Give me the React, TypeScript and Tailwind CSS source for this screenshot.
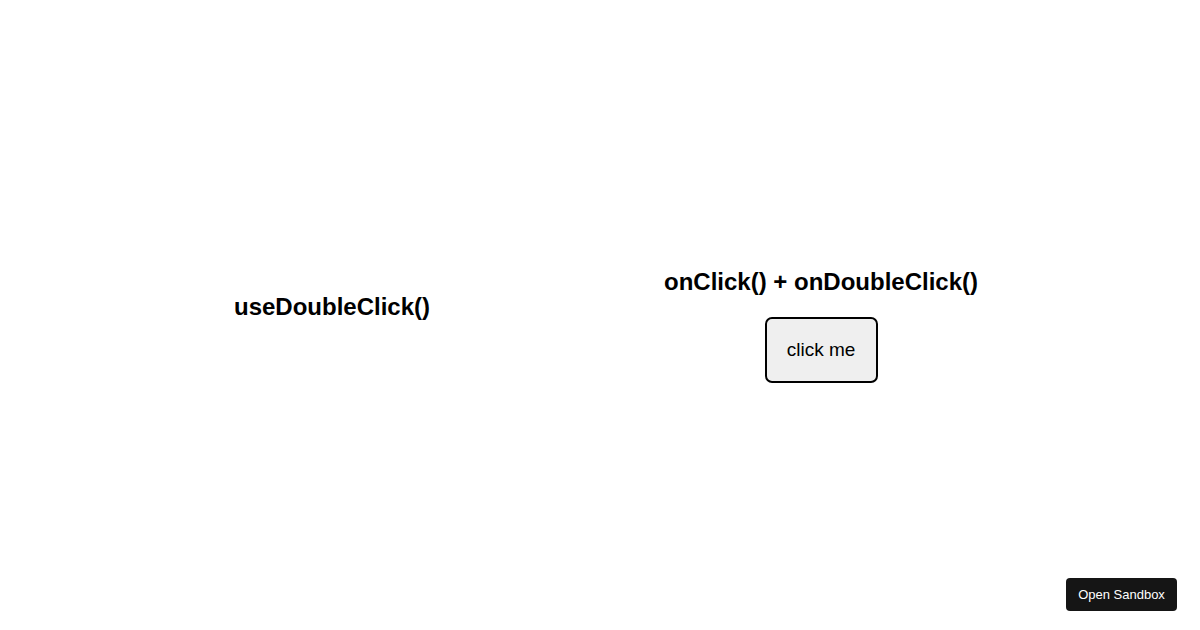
import React, { useState } from 'react'

export default function App() {
  const [count, setCount] = useState(0)

  return (
    <div className="relative h-[630px] w-[1200px] overflow-hidden bg-white font-['Liberation_Sans',Arial,sans-serif] text-black">
      <div className="flex h-full w-[1212px] items-center justify-evenly pt-5">
        <div className="flex flex-col items-center pb-9">
          <h2 className="text-[24px] font-bold leading-[28px]">useDoubleClick()</h2>
        </div>
        <div className="flex flex-col items-center gap-[21px]">
          <h2 className="text-[24px] font-bold leading-[28px]">onClick() + onDoubleClick()</h2>
          <button
            onClick={() => setCount(count + 1)}
            className="h-[66px] w-[113px] rounded-[7px] border-2 border-black bg-[#efefef] text-[19px] leading-[22px]"
          >
            click me
          </button>
        </div>
      </div>
      <button className="absolute bottom-[19px] right-[23px] h-[33px] w-[111px] rounded-[4px] bg-[#151515] text-[13px] text-white">
        Open Sandbox
      </button>
    </div>
  )
}
